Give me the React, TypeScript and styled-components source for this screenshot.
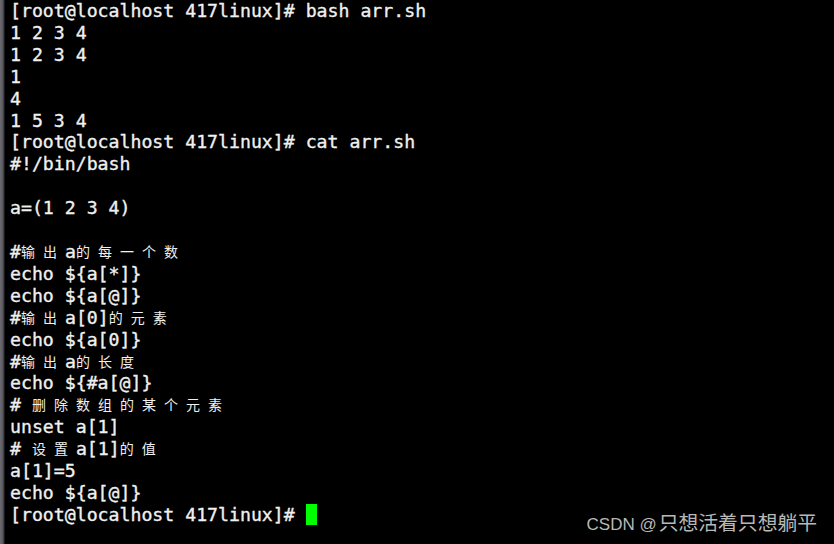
import React from "react";
import styled, { createGlobalStyle } from "styled-components";

const Global = createGlobalStyle`
  html, body { margin: 0; padding: 0; background: #000; }
  body { width: 834px; height: 544px; overflow: hidden; }
`;

const Screen = styled.div`
  position: relative;
  width: 834px;
  height: 544px;
  display: flex;
  background: #000;
  overflow: hidden;
`;

const Edge = styled.div`
  width: 5px;
  flex: none;
  background: linear-gradient(to right, #6a6a70 0, #56565c 3px, #2a2a2e 4px, #0a0a0a 5px);
`;

const Terminal = styled.div`
  flex: 1;
  padding: 0 0 0 5px;
  font-family: "DejaVu Sans Mono", "Liberation Mono", monospace;
  font-size: 18.2px;
  line-height: 21.92px;
  color: #f0f0f0;
  -webkit-text-stroke: 0.35px #f0f0f0;
  white-space: pre;
`;

const Line = styled.div`
  height: 21.92px;
`;

const Wide = styled.span`
  display: inline-block;
  width: 22px;
  font-family: "Noto Sans CJK SC", sans-serif;
  font-size: 14px;
  -webkit-text-stroke: 0;
  vertical-align: top;
  line-height: 21px;
`;

const Cursor = styled.span`
  display: inline-block;
  width: 11px;
  height: 21px;
  background: #00ff00;
  vertical-align: top;
`;

const Watermark = styled.div`
  position: absolute;
  right: 17px;
  bottom: 8px;
  font-family: "Liberation Sans", sans-serif;
  font-size: 17px;
  color: #b8b8b8;
  white-space: nowrap;
`;

const WatermarkCjk = styled.span`
  font-family: "Noto Sans CJK SC", sans-serif;
  font-size: 19.8px;
  margin-left: 2px;
`;

const isCjk = (ch: string) => /[\u3000-\u9fff\uff00-\uffef]/.test(ch);

const renderText = (text: string) => {
  const out: React.ReactNode[] = [];
  let buf = "";
  const flush = (k: number) => {
    if (buf) {
      out.push(<span key={"t" + k}>{buf}</span>);
      buf = "";
    }
  };
  Array.from(text).forEach((ch, i) => {
    if (isCjk(ch)) {
      flush(i);
      out.push(<Wide key={i}>{ch}</Wide>);
    } else {
      buf += ch;
    }
  });
  flush(text.length);
  return out;
};

const lines: string[] = [
  "[root@localhost 417linux]# bash arr.sh",
  "1 2 3 4",
  "1 2 3 4",
  "1",
  "4",
  "1 5 3 4",
  "[root@localhost 417linux]# cat arr.sh",
  "#!/bin/bash",
  "",
  "a=(1 2 3 4)",
  "",
  "#输出a的每一个数",
  "echo ${a[*]}",
  "echo ${a[@]}",
  "#输出a[0]的元素",
  "echo ${a[0]}",
  "#输出a的长度",
  "echo ${#a[@]}",
  "# 删除数组的某个元素",
  "unset a[1]",
  "# 设置a[1]的值",
  "a[1]=5",
  "echo ${a[@]}",
];

export default function App() {
  return (
    <Screen>
      <Global />
      <Edge />
      <Terminal>
        {lines.map((l, i) => (
          <Line key={i}>{renderText(l)}</Line>
        ))}
        <Line>
          {"[root@localhost 417linux]# "}
          <Cursor />
        </Line>
      </Terminal>
      <Watermark>
        CSDN @<WatermarkCjk>只想活着只想躺平</WatermarkCjk>
      </Watermark>
    </Screen>
  );
}
